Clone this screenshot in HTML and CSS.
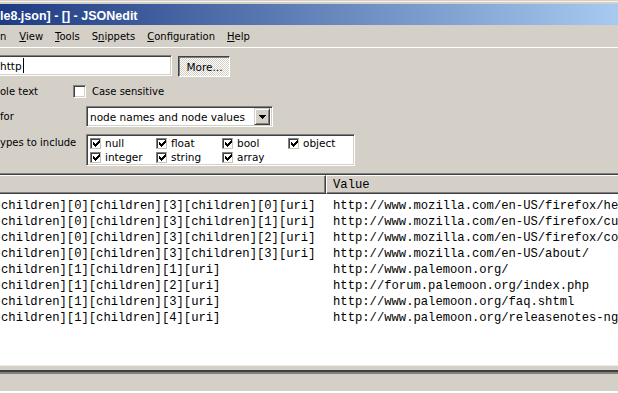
FILE: index.html
```html
<!DOCTYPE html>
<html>
<head>
<meta charset="utf-8">
<title>JSONedit</title>
<link rel="stylesheet" href="styles.css">
</head>
<body>
<div class="window">
  <div class="frame-top"></div>
  <div class="titlebar"><span class="title">le8.json] - [] - JSONedit</span></div>
  <div class="menubar">
    <span class="mi first">n</span>
    <span class="mi"><u>V</u>iew</span>
    <span class="mi"><u>T</u>ools</span>
    <span class="mi">S<u>n</u>ippets</span>
    <span class="mi"><u>C</u>onfiguration</span>
    <span class="mi"><u>H</u>elp</span>
  </div>
  <div class="form">
    <div class="row r1">
      <div class="textbox">http<span class="caret"></span></div>
      <div class="btn pushed">More...</div>
    </div>
    <div class="row r2">
      <span class="lbl w73">ole text</span>
      <span class="cb"></span>
      <span class="cblbl">Case sensitive</span>
    </div>
    <div class="row r3">
      <span class="lbl w86">for</span>
      <div class="select">
        <span class="sel-text">node names and node values</span>
        <span class="sel-btn"><svg width="7" height="4" viewBox="0 0 7 4"><path d="M0 0h7v1h-7z M1 1h5v1h-5z M2 2h3v1h-3z M3 3h1v1h-1z" fill="#000"/></svg></span>
      </div>
    </div>
    <div class="row r4">
      <span class="lbl w86 top">ypes to include</span>
      <div class="checklist">
        <div class="ci"><span class="ck"><svg width="7" height="7" viewBox="0 0 7 7"><path d="M6 0h1v1h-1z M5 1h2v1h-2z M0 2h1v1h-1z M4 2h3v1h-3z M0 3h2v1h-2z M3 3h3v1h-3z M0 4h5v1h-5z M1 5h3v1h-3z M2 6h1v1h-1z" fill="#000"/></svg></span>null</div>
        <div class="ci"><span class="ck"><svg width="7" height="7" viewBox="0 0 7 7"><path d="M6 0h1v1h-1z M5 1h2v1h-2z M0 2h1v1h-1z M4 2h3v1h-3z M0 3h2v1h-2z M3 3h3v1h-3z M0 4h5v1h-5z M1 5h3v1h-3z M2 6h1v1h-1z" fill="#000"/></svg></span>float</div>
        <div class="ci"><span class="ck"><svg width="7" height="7" viewBox="0 0 7 7"><path d="M6 0h1v1h-1z M5 1h2v1h-2z M0 2h1v1h-1z M4 2h3v1h-3z M0 3h2v1h-2z M3 3h3v1h-3z M0 4h5v1h-5z M1 5h3v1h-3z M2 6h1v1h-1z" fill="#000"/></svg></span>bool</div>
        <div class="ci"><span class="ck"><svg width="7" height="7" viewBox="0 0 7 7"><path d="M6 0h1v1h-1z M5 1h2v1h-2z M0 2h1v1h-1z M4 2h3v1h-3z M0 3h2v1h-2z M3 3h3v1h-3z M0 4h5v1h-5z M1 5h3v1h-3z M2 6h1v1h-1z" fill="#000"/></svg></span>object</div>
        <div class="ci"><span class="ck"><svg width="7" height="7" viewBox="0 0 7 7"><path d="M6 0h1v1h-1z M5 1h2v1h-2z M0 2h1v1h-1z M4 2h3v1h-3z M0 3h2v1h-2z M3 3h3v1h-3z M0 4h5v1h-5z M1 5h3v1h-3z M2 6h1v1h-1z" fill="#000"/></svg></span>integer</div>
        <div class="ci"><span class="ck"><svg width="7" height="7" viewBox="0 0 7 7"><path d="M6 0h1v1h-1z M5 1h2v1h-2z M0 2h1v1h-1z M4 2h3v1h-3z M0 3h2v1h-2z M3 3h3v1h-3z M0 4h5v1h-5z M1 5h3v1h-3z M2 6h1v1h-1z" fill="#000"/></svg></span>string</div>
        <div class="ci"><span class="ck"><svg width="7" height="7" viewBox="0 0 7 7"><path d="M6 0h1v1h-1z M5 1h2v1h-2z M0 2h1v1h-1z M4 2h3v1h-3z M0 3h2v1h-2z M3 3h3v1h-3z M0 4h5v1h-5z M1 5h3v1h-3z M2 6h1v1h-1z" fill="#000"/></svg></span>array</div>
      </div>
    </div>
  </div>
  <div class="list">
    <div class="header">
      <div class="hcell h1"></div>
      <div class="hcell h2">Value</div>
    </div>
    <div class="rows">
      <div class="lrow"><span class="c1">children][0][children][3][children][0][uri]</span><span class="c2">http://www.mozilla.com/en-US/firefox/help/</span></div>
      <div class="lrow"><span class="c1">children][0][children][3][children][1][uri]</span><span class="c2">http://www.mozilla.com/en-US/firefox/customize/</span></div>
      <div class="lrow"><span class="c1">children][0][children][3][children][2][uri]</span><span class="c2">http://www.mozilla.com/en-US/firefox/community/</span></div>
      <div class="lrow"><span class="c1">children][0][children][3][children][3][uri]</span><span class="c2">http://www.mozilla.com/en-US/about/</span></div>
      <div class="lrow"><span class="c1">children][1][children][1][uri]</span><span class="c2">http://www.palemoon.org/</span></div>
      <div class="lrow"><span class="c1">children][1][children][2][uri]</span><span class="c2">http://forum.palemoon.org/index.php</span></div>
      <div class="lrow"><span class="c1">children][1][children][3][uri]</span><span class="c2">http://www.palemoon.org/faq.shtml</span></div>
      <div class="lrow"><span class="c1">children][1][children][4][uri]</span><span class="c2">http://www.palemoon.org/releasenotes-ng.shtml</span></div>
    </div>
  </div>
  <div class="statusbar"></div>
  <div class="frame-bottom"></div>
</div>
</body>
</html>
```

FILE: styles.css
```css
html, body {
  margin: 0;
  padding: 0;
  background: #d4d0c8;
  overflow: hidden;
}
body {
  font-family: "DejaVu Sans", "Liberation Sans", sans-serif;
  font-size: 10px;
  color: #000;
}
.window {
  width: 618px;
  height: 394px;
  overflow: hidden;
  display: flex;
  flex-direction: column;
}
.frame-top {
  height: 4px;
  flex: none;
  background: linear-gradient(#d4d0c8 0 1px, #f4f2ee 1px 2px, #d4d0c8 2px);
}
.titlebar {
  height: 21px;
  flex: none;
  display: flex;
  align-items: center;
  background: linear-gradient(to right, #1e3a82, #a6caf0);
  color: #fff;
  font-family: "Liberation Sans", Arial, sans-serif;
  font-weight: bold;
  font-size: 12.5px;
  white-space: nowrap;
}
.title { padding-top: 3px; }
.menubar {
  height: 22px;
  flex: none;
  display: flex;
  align-items: center;
  border-bottom: 1px solid #fff;
  white-space: nowrap;
}
.mi { padding: 0 6px; }
.mi.first { margin-left: -6px; margin-right: 1px; }
.mi u { text-decoration: underline; text-underline-offset: 1px; }

.form {
  flex: none;
  padding-top: 7px;
  display: flex;
  flex-direction: column;
}
.row { display: flex; white-space: nowrap; }
.r1 { height: 21px; align-items: flex-start; }
.r2 { margin-top: 9px; height: 13px; align-items: center; }
.r3 { margin-top: 8px; height: 21px; align-items: center; }
.r4 { margin-top: 7px; height: 32px; align-items: flex-start; }
.lbl { flex: none; line-height: 13px; }
.lbl.top { padding-top: 2px; }
.w73 { width: 73px; }
.w86 { width: 86px; }

.textbox, .select, .checklist {
  box-sizing: border-box;
  background: #fff;
  border: 1px solid;
  border-color: #808080 #fff #fff #808080;
  box-shadow: inset 1px 1px 0 #404040, inset -1px -1px 0 #d4d0c8;
}
.textbox {
  margin-left: -3px;
  width: 175px;
  height: 21px;
  padding-left: 2px;
  display: flex;
  align-items: center;
  font-size: 10.5px;
}
.caret {
  display: inline-block;
  width: 1px;
  height: 15px;
  background: #000;
  margin-left: 1px;
}
.btn {
  box-sizing: border-box;
  margin-left: 6px;
  margin-top: 1px;
  width: 52px;
  height: 21px;
  display: flex;
  align-items: center;
  justify-content: center;
  font-size: 10.5px;
}
.btn.pushed {
  border: 1px solid;
  border-color: #404040 #fff #fff #404040;
  box-shadow: inset 1px 1px 0 #808080;
  background: repeating-conic-gradient(#ffffff 0 25%, #d4d0c8 0 50%) 0 0 / 2px 2px;
  padding-top: 1px;
  padding-left: 1px;
}
.cb {
  flex: none;
  box-sizing: border-box;
  width: 13px;
  height: 13px;
  background: #fff;
  border: 1px solid;
  border-color: #808080 #fff #fff #808080;
  box-shadow: inset 1px 1px 0 #404040, inset -1px -1px 0 #d4d0c8;
}
.cblbl { margin-left: 6px; line-height: 13px; }
.select {
  width: 187px;
  height: 21px;
  display: flex;
  align-items: center;
  justify-content: space-between;
  padding: 0 2px 0 3px;
}
.sel-text { font-size: 10.5px; }
.sel-btn {
  box-sizing: border-box;
  width: 16px;
  height: 17px;
  display: flex;
  align-items: center;
  justify-content: center;
  background: #d4d0c8;
  border: 1px solid;
  border-color: #d4d0c8 #404040 #404040 #d4d0c8;
  box-shadow: inset 1px 1px 0 #fff, inset -1px -1px 0 #808080;
}
.sel-btn svg { display: block; }
.checklist {
  width: 269px;
  height: 32px;
  padding: 0 0 0 3px;
  display: grid;
  grid-template-columns: repeat(4, 66px);
  grid-auto-rows: 14px;
  align-content: center;
}
.ci {
  display: flex;
  align-items: center;
  font-size: 10.5px;
}
.ck {
  flex: none;
  box-sizing: border-box;
  width: 11px;
  height: 11px;
  margin-right: 4px;
  background: #fff;
  border: 1px solid;
  border-color: #808080 #c8c4bc #c8c4bc #808080;
  box-shadow: inset 1px 1px 0 #404040;
  display: flex;
  align-items: center;
  justify-content: center;
  padding: 1px 0 0 1px;
}
.ck svg { display: block; }

.list {
  flex: none;
  margin-top: 7px;
  height: 193px;
  box-sizing: border-box;
  border-top: 1px solid #808080;
  border-bottom: 1px solid #eeece6;
  background: #fff;
  display: flex;
  flex-direction: column;
  font-family: "Liberation Mono", "Courier New", monospace;
  font-size: 12.2px;
}
.header {
  flex: none;
  display: flex;
  height: 20px;
  border-top: 1px solid #404040;
  box-sizing: border-box;
  background: #d4d0c8;
}
.hcell {
  box-sizing: border-box;
  height: 19px;
  border-top: 1px solid #fff;
  border-bottom: 1px solid #404040;
  box-shadow: inset 0 -1px 0 #808080;
  line-height: 17px;
  white-space: nowrap;
}
.h1 {
  flex: none;
  width: 326px;
  border-right: 1px solid #404040;
  box-shadow: inset 0 -1px 0 #808080, inset -1px 0 0 #808080;
}
.h2 {
  flex: 1;
  border-left: 1px solid #fff;
  padding-left: 6px;
  padding-top: 1px;
}
.rows {
  padding-top: 4px;
  overflow: hidden;
}
.lrow {
  display: flex;
  height: 16px;
  line-height: 16px;
  white-space: nowrap;
}
.c1 {
  flex: none;
  box-sizing: border-box;
  width: 326px;
  padding-left: 1px;
  overflow: hidden;
}
.c2 {
  padding-left: 7px;
}
.statusbar {
  flex: none;
  margin-top: 4px;
  height: 23px;
  box-sizing: border-box;
  border-top: 2px solid #404040;
  border-bottom: 2px solid #fff;
  box-shadow: inset 0 2px 0 #808080;
}
.frame-bottom {
  flex: none;
  height: 3px;
  box-sizing: border-box;
  border-top: 1px solid #d4d0c8;
  border-bottom: 2px solid #6e6e6e;
}
```
